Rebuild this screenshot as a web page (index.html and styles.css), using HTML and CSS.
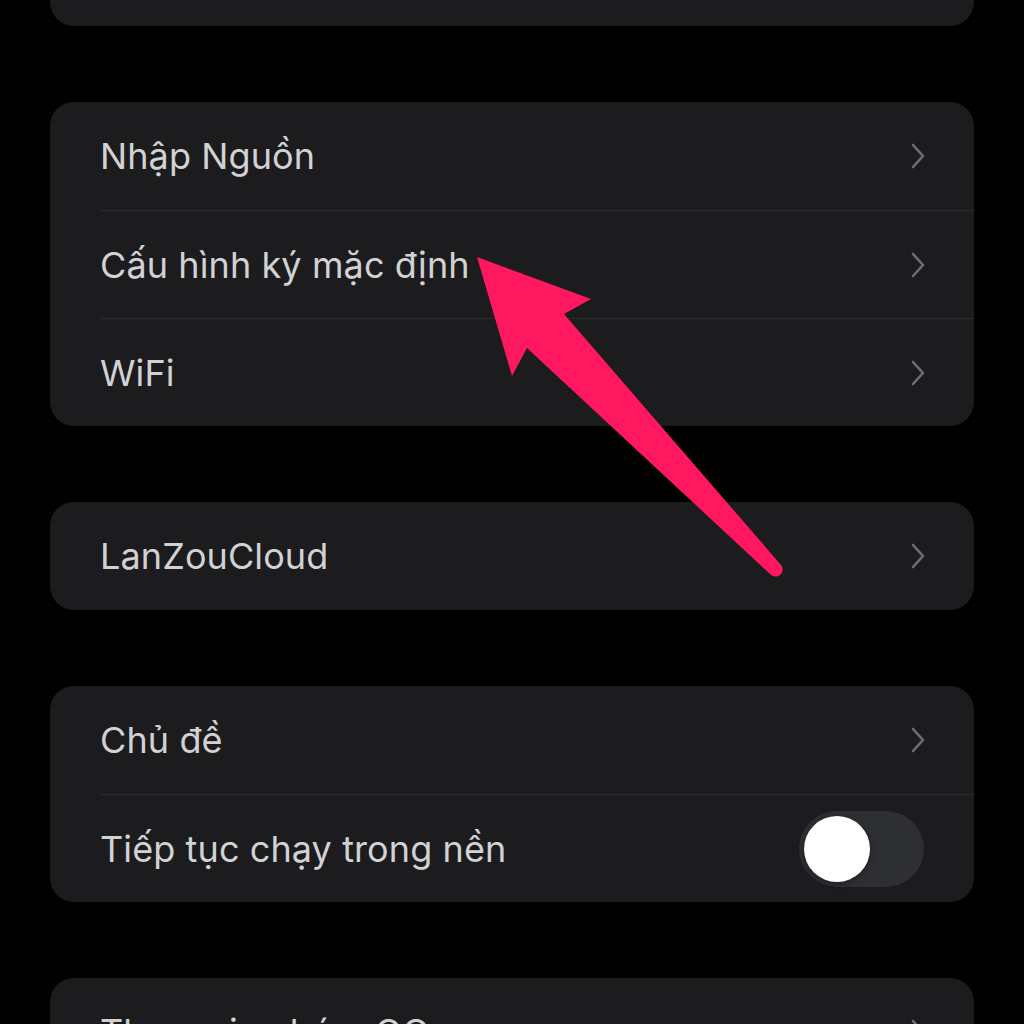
FILE: index.html
```html
<!DOCTYPE html>
<html lang="vi">
<head>
<meta charset="utf-8">
<link rel="stylesheet" href="styles.css">
</head>
<body>
<div class="page">
  <div class="list">
    <div class="card card-top">
      <div class="row"><span class="label"></span></div>
    </div>
    <div class="card">
      <div class="row"><span class="label">Nhập Nguồn</span><span class="chev"><svg viewBox="0 0 16 26" width="16" height="26"><path d="M3 2 L13 13 L3 24" fill="none" stroke="#6e6e73" stroke-width="2.6" stroke-linecap="round" stroke-linejoin="round"/></svg></span></div>
      <div class="row"><span class="label">Cấu hình ký mặc định</span><span class="chev"><svg viewBox="0 0 16 26" width="16" height="26"><path d="M3 2 L13 13 L3 24" fill="none" stroke="#6e6e73" stroke-width="2.6" stroke-linecap="round" stroke-linejoin="round"/></svg></span></div>
      <div class="row"><span class="label">WiFi</span><span class="chev"><svg viewBox="0 0 16 26" width="16" height="26"><path d="M3 2 L13 13 L3 24" fill="none" stroke="#6e6e73" stroke-width="2.6" stroke-linecap="round" stroke-linejoin="round"/></svg></span></div>
    </div>
    <div class="card">
      <div class="row"><span class="label">LanZouCloud</span><span class="chev"><svg viewBox="0 0 16 26" width="16" height="26"><path d="M3 2 L13 13 L3 24" fill="none" stroke="#6e6e73" stroke-width="2.6" stroke-linecap="round" stroke-linejoin="round"/></svg></span></div>
    </div>
    <div class="card">
      <div class="row"><span class="label">Chủ đề</span><span class="chev"><svg viewBox="0 0 16 26" width="16" height="26"><path d="M3 2 L13 13 L3 24" fill="none" stroke="#6e6e73" stroke-width="2.6" stroke-linecap="round" stroke-linejoin="round"/></svg></span></div>
      <div class="row"><span class="label">Tiếp tục chạy trong nền</span><span class="toggle"><span class="knob"></span></span></div>
    </div>
    <div class="card">
      <div class="row"><span class="label">Tham gia nhóm QQ</span><span class="chev"><svg viewBox="0 0 16 26" width="16" height="26"><path d="M3 2 L13 13 L3 24" fill="none" stroke="#6e6e73" stroke-width="2.6" stroke-linecap="round" stroke-linejoin="round"/></svg></span></div>
    </div>
  </div>
  <svg class="arrow" viewBox="0 0 1024 1024" width="1024" height="1024">
    <path d="M477 257 L591 299 L564 314 L781 565 A6.5 6.5 0 0 1 770 574 L527 348 L512 376 Z" fill="#ff1760"/>
  </svg>
</div>
</body>
</html>
```

FILE: styles.css
```css
html, body {
  margin: 0;
  padding: 0;
  background: #000;
}
body {
  width: 1024px;
  height: 1024px;
  overflow: hidden;
  font-family: Inter, "Noto Sans", "Liberation Sans", sans-serif;
}
.page {
  position: relative;
  width: 1024px;
  height: 1024px;
  overflow: hidden;
}
.list {
  display: flex;
  flex-direction: column;
  gap: 76px;
  padding: 0 50px;
  margin-top: -82px;
}
.card {
  background: #1c1c1e;
  border-radius: 24px;
  padding-left: 50px;
  overflow: hidden;
}
.row {
  height: 108px;
  display: flex;
  align-items: center;
  justify-content: space-between;
  padding-right: 48px;
  box-sizing: border-box;
}
.row + .row {
  border-top: 1.5px solid #2c2c2e;
  height: 108px;
}
.label {
  color: #d2d2d4;
  font-size: 36px;
  font-weight: 400;
  letter-spacing: 0.1px;
}
.chev {
  display: flex;
  align-items: center;
}
.toggle {
  width: 125px;
  height: 76px;
  border-radius: 38px;
  background: #2e2f33;
  position: relative;
  margin-right: 2px;
}
.knob {
  position: absolute;
  left: 5px;
  top: 5px;
  width: 66px;
  height: 66px;
  border-radius: 50%;
  background: #fff;
  box-shadow: 0 2px 6px rgba(0,0,0,0.35);
}
.arrow {
  position: absolute;
  left: 0;
  top: 0;
  pointer-events: none;
}
```
